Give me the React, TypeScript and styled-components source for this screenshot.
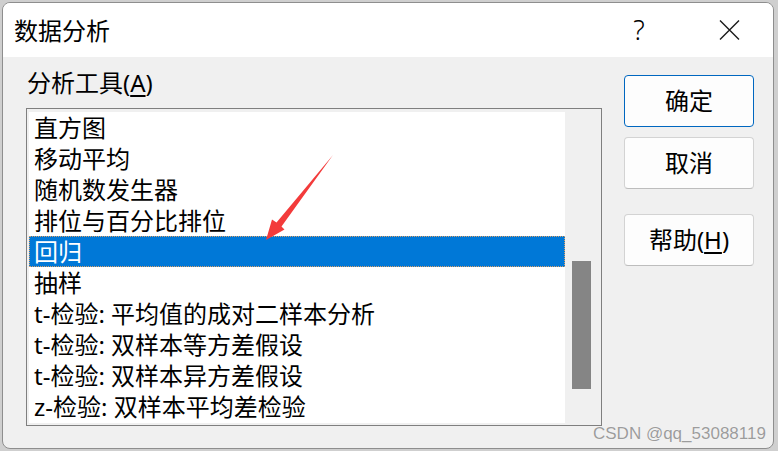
import React from 'react';
import styled, { createGlobalStyle } from 'styled-components';

const Global = createGlobalStyle`
  html, body { margin: 0; padding: 0; }
  body {
    background: #cfcfcf;
    width: 778px;
    height: 451px;
    overflow: hidden;
    font-family: "Noto Sans", "Noto Sans CJK SC", sans-serif;
    color: #000;
  }
`;

const Screen = styled.div`
  position: relative;
  width: 778px;
  height: 451px;
  box-sizing: border-box;
  padding: 2px 0 0 2px;
`;

const Dialog = styled.div`
  width: 772px;
  height: 447px;
  box-sizing: border-box;
  border: 1px solid #8e8e8e;
  border-radius: 8px;
  background: #f0f0f0;
  overflow: hidden;
  display: flex;
  flex-direction: column;
`;

const TitleBar = styled.div`
  height: 54px;
  flex: none;
  background: #ffffff;
  display: flex;
  align-items: center;
  padding: 0 33px 0 11px;
`;

const Title = styled.div`
  font-size: 24px;
  line-height: 30px;
  font-family: "Noto Sans CJK SC", sans-serif;
`;

const HelpGlyph = styled.div`
  margin-left: auto;
  width: 20px;
  text-align: center;
  font-size: 27px;
  line-height: 30px;
  font-family: "Noto Sans", sans-serif;
  font-weight: 300;
`;

const CloseIcon = styled.svg`
  margin-left: 70px;
  display: block;
`;

const Body = styled.div`
  flex: 1;
  display: flex;
  padding: 10px 19px 0 23px;
`;

const LeftCol = styled.div`
  width: 576px;
  display: flex;
  flex-direction: column;
`;

const Label = styled.div`
  height: 31px;
  line-height: 31px;
  font-size: 24px;
  padding-left: 1px;
  margin-bottom: 10px;
  white-space: nowrap;
`;

const Key = styled.span`
  text-decoration: underline;
  text-decoration-thickness: 2px;
  text-underline-offset: 3px;
`;

const ListBox = styled.div`
  width: 576px;
  height: 318px;
  box-sizing: border-box;
  border: 1px solid #7f7f7f;
  padding: 3px 2px 2px 2px;
  background: #f0f0f0;
  display: flex;
`;

const Items = styled.div`
  width: 536px;
  background: #ffffff;
  display: flex;
  flex-direction: column;
`;

const Item = styled.div<{ $selected?: boolean }>`
  height: 31px;
  line-height: 31px;
  padding-left: 5px;
  font-size: 24px;
  white-space: nowrap;
  background: ${p => (p.$selected ? '#0078d7' : 'transparent')};
  color: ${p => (p.$selected ? '#ffffff' : '#000000')};
  outline: ${p => (p.$selected ? '1px dotted #d9a06a' : 'none')};
  outline-offset: -1px;
`;

const ScrollTrack = styled.div`
  width: 34px;
  display: flex;
  flex-direction: column;
  padding-left: 7px;
  box-sizing: border-box;
`;

const Thumb = styled.div`
  margin-top: 149px;
  width: 19px;
  height: 128px;
  background: #858585;
`;

const RightCol = styled.div`
  margin-left: 22px;
  width: 130px;
  padding-top: 8px;
  display: flex;
  flex-direction: column;
`;

const Button = styled.div<{ $primary?: boolean; $gap?: number }>`
  height: 52px;
  box-sizing: border-box;
  margin-top: ${p => p.$gap ?? 0}px;
  border: 1px solid ${p => (p.$primary ? '#0067c0' : '#d3d3d3')};
  border-bottom-color: ${p => (p.$primary ? '#0067c0' : '#bdbdbd')};
  border-radius: 4px;
  background: #fdfdfd;
  display: flex;
  align-items: center;
  justify-content: center;
  font-size: 24px;
  line-height: 30px;
  white-space: nowrap;
`;

const Watermark = styled.div`
  position: absolute;
  left: 593px;
  top: 424px;
  font-family: "Liberation Sans", sans-serif;
  font-size: 17px;
  line-height: 20px;
  color: #9c9c9c;
  text-shadow: 0 0 1px #ffffff;
  white-space: nowrap;
`;

const ArrowLayer = styled.svg`
  position: absolute;
  left: 0;
  top: 0;
  pointer-events: none;
`;

const items = [
  '直方图',
  '移动平均',
  '随机数发生器',
  '排位与百分比排位',
  '回归',
  '抽样',
  't-检验: 平均值的成对二样本分析',
  't-检验: 双样本等方差假设',
  't-检验: 双样本异方差假设',
  'z-检验: 双样本平均差检验',
];

export default function App() {
  return (
    <>
      <Global />
      <Screen>
        <Dialog>
          <TitleBar>
            <Title>数据分析</Title>
            <HelpGlyph>?</HelpGlyph>
            <CloseIcon width="21" height="20" viewBox="0 0 21 20">
              <path d="M1 0.5 L20 19.5 M20 0.5 L1 19.5" stroke="#1a1a1a" strokeWidth="1.4" fill="none" />
            </CloseIcon>
          </TitleBar>
          <Body>
            <LeftCol>
              <Label>
                分析工具(<Key>A</Key>)
              </Label>
              <ListBox>
                <Items>
                  {items.map((t, i) => (
                    <Item key={t} $selected={i === 4}>
                      {t}
                    </Item>
                  ))}
                </Items>
                <ScrollTrack>
                  <Thumb />
                </ScrollTrack>
              </ListBox>
            </LeftCol>
            <RightCol>
              <Button $primary>确定</Button>
              <Button $gap={10}>取消</Button>
              <Button $gap={25}>
                帮助(<Key>H</Key>)
              </Button>
            </RightCol>
          </Body>
        </Dialog>
        <Watermark>CSDN @qq_53088119</Watermark>
        <ArrowLayer width="778" height="451" viewBox="0 0 778 451">
          <polygon
            points="333,155 281.5,226.5 284.5,229.5 266,240 272,219.5 276.5,222.5"
            fill="#f33b3b"
          />
        </ArrowLayer>
      </Screen>
    </>
  );
}
